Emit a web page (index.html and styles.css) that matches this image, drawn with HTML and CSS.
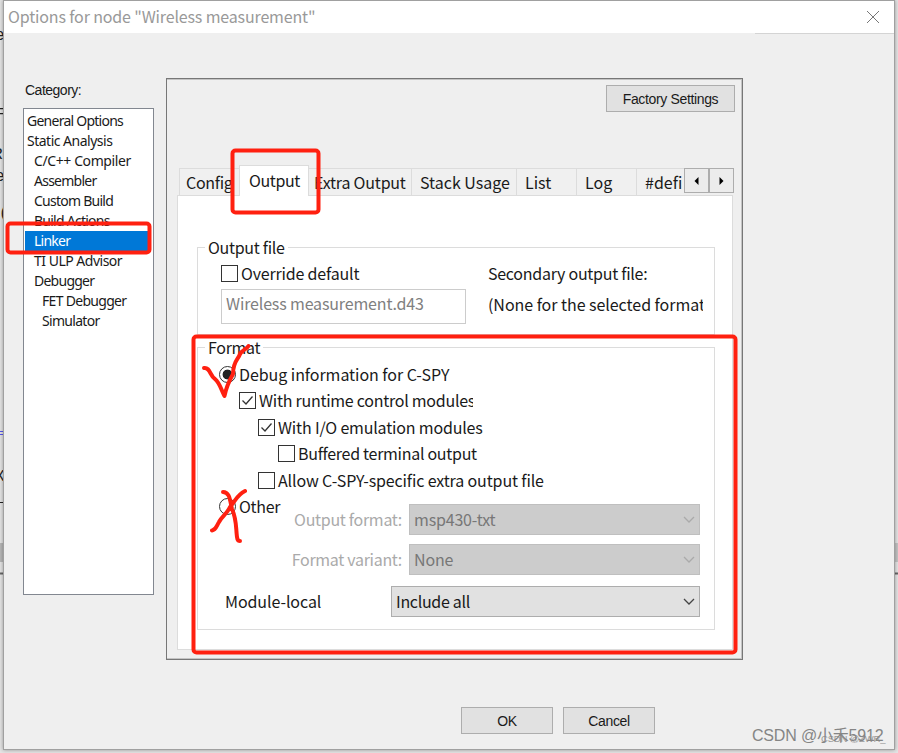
FILE: index.html
```
<!DOCTYPE html>
<html lang="en">
<head>
    <meta charset="UTF-8">
    <title>Options for node "Wireless measurement"</title>
    <link rel="stylesheet" href="styles.css">
</head>
<body>
    <!-- Editor window behind the dialog -->
    <svg class="backdrop" width="898" height="753" viewBox="0 0 898 753">
        <rect x="0" y="543" width="4" height="19" fill="#b8b8b8"/>
        <rect x="894" y="543" width="4" height="19" fill="#c4c4c4"/>
        <path d="M0 573.5H4M894 573.5H898" stroke="#666" stroke-width="2"/>
        <path d="M0 502.5H4" stroke="#222"/>
        <path d="M0 431.5H4M0 434.5H4" stroke="#5555ee"/>
        <g class="code">
            <text x="-5" y="40">e</text>
            <text x="-4" y="119">F</text>
            <text x="-7" y="159">R</text>
            <text x="-5" y="181">e</text>
            <text x="-1" y="218">(</text>
            <text x="-5" y="481">X</text>
        </g>
    </svg>

    <div class="dialog">
        <div class="title-bar">
            <span class="title">Options for node "Wireless measurement"</span>
            <svg class="close" width="14" height="14" viewBox="0 0 14 14"><path d="M1 1L13 13M13 1L1 13"/></svg>
        </div>

        <div class="content">
            <!-- Category -->
            <div class="category">
                <label class="category-label">Category:</label>
                <ul class="category-list">
                    <li>General Options</li>
                    <li class="static">Static Analysis</li>
                    <li class="level-1 compiler">C/C++ Compiler</li>
                    <li class="level-1">Assembler</li>
                    <li class="level-1">Custom Build</li>
                    <li class="level-1">Build Actions</li>
                    <li class="level-1 selected">Linker</li>
                    <li class="level-1 advisor">TI ULP Advisor</li>
                    <li class="level-1">Debugger</li>
                    <li class="level-2">FET Debugger</li>
                    <li class="level-2">Simulator</li>
                </ul>
            </div>

            <!-- Settings -->
            <div class="panel">
                <button class="button factory">Factory Settings</button>
                <div class="tabs">
                    <div class="tab tab-config">Config</div>
                    <div class="tab tab-output active">Output</div>
                    <div class="tab tab-extra">Extra Output</div>
                    <div class="tab tab-stack">Stack Usage</div>
                    <div class="tab tab-list">List</div>
                    <div class="tab tab-log">Log</div>
                    <div class="tab tab-define">#defi</div>
                    <button class="scroll"><svg width="5" height="8" viewBox="0 0 5 8"><path d="M4.5 0V8L0.5 4Z"/></svg></button>
                    <button class="scroll"><svg width="5" height="8" viewBox="0 0 5 8"><path d="M0.5 0V8L4.5 4Z"/></svg></button>
                </div>
                <div class="tab-page">
                    <fieldset class="group output-file">
                        <legend>Output file</legend>
                        <div class="file-columns">
                            <div class="file-left">
                                <div class="option"><span class="check"></span><span class="text">Override default</span></div>
                                <div class="text-box">Wireless measurement.d43</div>
                            </div>
                            <div class="file-right">
                                <div class="secondary-label">Secondary output file:</div>
                                <div class="secondary-value">(None for the selected format)</div>
                            </div>
                        </div>
                    </fieldset>

                    <fieldset class="group format">
                        <legend>Format</legend>
                        <div class="option debug"><span class="radio checked"></span><span class="text">Debug information for C-SPY</span></div>
                        <div class="option indent-1"><span class="check"><svg width="15" height="15" viewBox="0 0 15 15"><path d="M2.5 7.5L6 11L12.5 3.5"/></svg></span><span class="text runtime">With runtime control modules</span></div>
                        <div class="option indent-2"><span class="check"><svg width="15" height="15" viewBox="0 0 15 15"><path d="M2.5 7.5L6 11L12.5 3.5"/></svg></span><span class="text">With I/O emulation modules</span></div>
                        <div class="option indent-3"><span class="check"></span><span class="text buffered">Buffered terminal output</span></div>
                        <div class="option indent-2 allow"><span class="check"></span><span class="text">Allow C-SPY-specific extra output file</span></div>
                        <div class="combo-row">
                            <div class="option other"><span class="radio"></span><span class="text">Other</span></div>
                            <label class="combo-label disabled">Output format:</label>
                            <div class="combo disabled"><span>msp430-txt</span><svg width="12" height="7" viewBox="0 0 12 7"><path d="M1 1L6 6L11 1"/></svg></div>
                        </div>
                        <div class="combo-row">
                            <label class="combo-label disabled">Format variant:</label>
                            <div class="combo disabled"><span>None</span><svg width="12" height="7" viewBox="0 0 12 7"><path d="M1 1L6 6L11 1"/></svg></div>
                        </div>
                        <div class="combo-row module">
                            <label class="module-label">Module-local</label>
                            <div class="combo"><span class="include">Include all</span><svg width="12" height="7" viewBox="0 0 12 7"><path d="M1 1L6 6L11 1"/></svg></div>
                        </div>
                    </fieldset>
                </div>
            </div>
        </div>

        <div class="footer">
            <button class="button">OK</button>
            <button class="button">Cancel</button>
        </div>
    </div>

    <!-- Red pen marks -->
    <svg class="marks" width="898" height="753" viewBox="0 0 898 753">
        <rect x="7.5" y="223.5" width="142" height="29" rx="3"/>
        <rect x="232.5" y="150.5" width="86" height="62" rx="3"/>
        <rect x="193.5" y="336.5" width="542" height="316" rx="3"/>
        <path d="M204 368C210 367 210 376 215 379C220 383 221 390 224.5 396C226 388 228 383 233 374C233 361 238 360 240 354C242 350 246 350 248.5 346"/>
        <path d="M223 492C230 492 230 501 232 509C236 518 236 526 236.5 532C237 538 237 541 240 541M245 491C237 495 236 500 230 507C227 514 222 516 219 522C216 527 216 530 212 530.5"/>
    </svg>

    <div class="stamp">CSDN @ZWR_</div>
    <div class="watermark">CSDN @小禾5912</div>
</body>
</html>
```
FILE: styles.css
```
* {
    box-sizing: border-box;
}
body {
    margin: 0;
    width: 898px;
    height: 753px;
    overflow: hidden;
    position: relative;
    background: #e4e4e4;
    font-family: "Noto Sans CJK SC", "Noto Sans", sans-serif;
    font-size: 16px;
    line-height: 20px;
    letter-spacing: -0.18px;
    color: #1a1a1a;
}
.backdrop {
    position: absolute;
    left: 0;
    top: 0;
}
.code {
    font-family: "Liberation Mono", monospace;
    font-size: 16px;
    fill: #222;
}
.dialog {
    position: relative;
    width: 892px;
    height: 750px;
    margin-left: 3px;
    border: 1px solid #a0a0a0;
    background: #efefef;
    box-shadow: 0 0 4px rgba(0, 0, 0, 0.35);
}
.title-bar {
    display: flex;
    justify-content: space-between;
    align-items: center;
    height: 33px;
    padding: 0 14px 0 4px;
    background: linear-gradient(#d4d4d4, #d4d4d4) right bottom / 139px 1px no-repeat, linear-gradient(#fff 32px, #efefef 32px);
}
.title {
    padding-bottom: 3px;
    letter-spacing: -0.15px;
    color: #999;
}
.close {
    margin-bottom: 1px;
    fill: none;
    stroke: #777;
}
.content {
    display: flex;
    gap: 12px;
    padding: 44px 0 0 19px;
}
.category {
    width: 131px;
}
.category-label {
    display: block;
    height: 30px;
    padding: 2px 0 0 2px;
    font-family: "Liberation Sans", Arial, sans-serif;
    font-size: 14px;
    letter-spacing: -0.5px;
}
.category-list {
    height: 487px;
    margin: 0;
    padding: 2px 2px 2px 0;
    list-style: none;
    border: 1px solid #828790;
    background: #fff;
    font-family: "Noto Sans", sans-serif;
    font-size: 14px;
    line-height: 19px;
    letter-spacing: -0.75px;
}
.category-list li {
    height: 20px;
    margin-left: 1px;
    padding-left: 2px;
    white-space: nowrap;
}
.category-list .static,
.category-list .advisor {
    letter-spacing: -0.5px;
}
.category-list .compiler {
    letter-spacing: -0.4px;
}
.category-list .level-1 {
    padding-left: 9px;
}
.category-list .level-2 {
    padding-left: 17px;
    letter-spacing: -0.7px;
}
.category-list .selected {
    background: #0078d7;
    color: #fff;
}
.panel {
    width: 577px;
    height: 582px;
    padding: 6px 8px 0 10px;
    border: 1px solid #777;
    box-shadow: inset -1px 1px #c4c4c4, inset 0 -1px #c4c4c4;
}
.button {
    width: 92px;
    height: 27px;
    padding: 0;
    border: 1px solid #adadad;
    background: #e1e1e1;
    font-family: "Liberation Sans", Arial, sans-serif;
    font-size: 14px;
    letter-spacing: -0.35px;
    color: #1a1a1a;
}
.factory {
    display: block;
    width: 129px;
    margin-left: auto;
    margin-right: -1px;
}

/* Tabs */
.tabs {
    display: flex;
    align-items: flex-start;
    height: 27px;
    margin-top: 56px;
    padding-left: 2px;
}
.tab {
    height: 27px;
    padding: 3px 0 0 8px;
    border-top: 1px solid #dcdcdc;
    border-right: 1px solid #dcdcdc;
    background: #f0f0f0;
    letter-spacing: 0;
    white-space: nowrap;
    overflow: hidden;
}
.tab-config {
    width: 60px;
    padding-left: 6px;
    border-left: 1px solid #dcdcdc;
    border-right: none;
    letter-spacing: -0.3px;
}
.tab-output {
    width: 70px;
    letter-spacing: -0.4px;
}
.tab-extra {
    width: 103px;
    padding-left: 5px;
    letter-spacing: -0.2px;
}
.tab-stack {
    width: 105px;
}
.tab-list,
.tab-log {
    width: 60px;
}
.tab-define {
    width: 47px;
    border-right: none;
}
.tab.active {
    height: 31px;
    margin-top: -3px;
    padding: 4px 0 0 9px;
    border-left: 1px solid #dcdcdc;
    background: #fff;
    position: relative;
}
.scroll {
    display: flex;
    align-items: center;
    justify-content: center;
    width: 25px;
    height: 25px;
    padding: 0;
    border: 1px solid #adadad;
    background: #ececec;
}
.tab-page {
    width: 556px;
    height: 455px;
    padding: 41px 17px 0 19px;
    border: 1px solid #dcdcdc;
    background: #fff;
}

/* Groups */
.group {
    min-width: 0;
    margin: 0;
    padding: 0;
    border: 1px solid #dcdcdc;
}
.group legend {
    height: 20px;
    margin-left: 7px;
    padding: 0 3px;
    letter-spacing: -0.3px;
}
.output-file {
    height: 98px;
}
.file-columns {
    display: flex;
    gap: 22px;
    padding: 6px 11px 0 23px;
}
.file-left {
    width: 245px;
}
.text-box {
    height: 35px;
    margin-top: 6px;
    padding: 3px 4px;
    border: 1px solid #ccc;
    letter-spacing: -0.15px;
    color: #808080;
}
.file-right {
    flex: 1;
    overflow: hidden;
    white-space: nowrap;
}
.secondary-label {
    letter-spacing: -0.27px;
}
.secondary-value {
    width: 215px;
    margin-top: 11px;
    overflow: hidden;
    letter-spacing: -0.04px;
}
.format {
    height: 293px;
    margin-top: 2px;
}
.option {
    display: flex;
    align-items: center;
    gap: 3px;
    height: 20px;
    white-space: nowrap;
}
.text {
    padding-bottom: 1px;
}
.check {
    width: 17px;
    height: 17px;
    border: 1px solid #333;
    background: #fff;
}
.check svg {
    display: block;
    fill: none;
    stroke: #333;
    stroke-width: 1.3;
}
.radio {
    width: 17px;
    height: 17px;
    border: 1px solid #333;
    border-radius: 50%;
    background: #fff;
}
.radio.checked {
    background: radial-gradient(circle, #222 4.5px, #fff 5.3px);
}
.format .option {
    height: 26.5px;
}
.format .debug {
    margin: 4px 0 0 21px;
    letter-spacing: -0.05px;
}
.indent-1 {
    margin-left: 41px;
}
.indent-2 {
    margin-left: 60px;
}
.indent-3 {
    margin-left: 80px;
}
.runtime {
    width: 214px;
    overflow: hidden;
    letter-spacing: -0.26px;
}
.buffered {
    letter-spacing: -0.29px;
}
.combo-row {
    display: flex;
    justify-content: flex-end;
    align-items: center;
    height: 31px;
    margin: 0 14px 9px 21px;
}
.allow {
    margin-bottom: 10px;
    letter-spacing: -0.13px;
}
.format .other {
    margin: -25px auto 0 0;
    letter-spacing: -0.3px;
}
.combo-label {
    margin-right: 7px;
    letter-spacing: -0.3px;
}
.combo-label.disabled {
    color: #aaa;
}
.combo {
    display: flex;
    justify-content: space-between;
    align-items: center;
    width: 291px;
    height: 31px;
    padding: 0 4px;
    border: 1px solid #adadad;
    background: #e1e1e1;
}
.combo svg {
    fill: none;
    stroke: #444;
    stroke-width: 1.3;
}
.combo.disabled {
    border-color: #bfbfbf;
    background: #ccc;
    color: #777;
}
.combo.disabled svg {
    stroke: #aaa;
}
.include {
    letter-spacing: -0.3px;
}
.module {
    margin-top: 11px;
    margin-left: 27px;
    justify-content: space-between;
}
.module .combo {
    width: 309px;
}
.module-label {
    letter-spacing: -0.08px;
}
.footer {
    display: flex;
    gap: 10px;
    padding: 47px 0 0 457px;
}

/* Overlays */
.marks {
    position: absolute;
    left: 0;
    top: 0;
    fill: none;
    stroke: #ff2010;
    stroke-width: 4;
    stroke-linecap: round;
    stroke-linejoin: round;
}
.watermark {
    position: absolute;
    left: 752px;
    top: 726px;
    font-family: "Liberation Sans", "Noto Sans CJK SC", sans-serif;
    font-size: 16px;
    color: #858585;
    white-space: nowrap;
}
.stamp {
    position: absolute;
    left: 821px;
    top: 729px;
    font-family: "Liberation Sans", sans-serif;
    font-size: 9.5px;
    color: #999;
    white-space: nowrap;
}
```
